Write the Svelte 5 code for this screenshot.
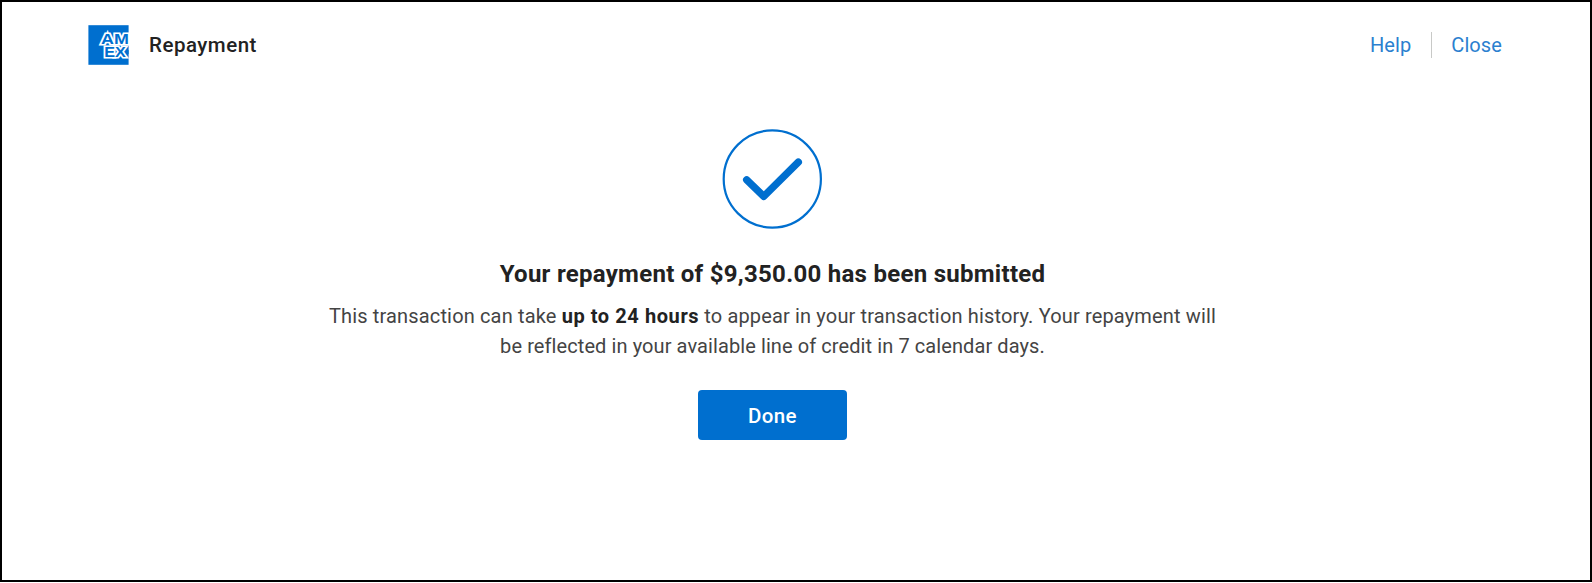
<script>

    let amount = '$9,350.00';

    let links = [
        ['#help', 'Help'],
        ['#close', 'Close'],
    ];

</script>

<div class="page">

    <header>
        <svg class="logo" width="41" height="40" viewBox="0 0 41 40" role="img" aria-label="AMEX">
            <rect x="0.4" y="0.2" width="40.2" height="39.6" fill="#006fcf" />
            <g class="letters">
                <text x="13" y="18.7" textLength="27.8" lengthAdjust="spacingAndGlyphs">AM</text>
                <text x="16.2" y="32" textLength="21.6" lengthAdjust="spacingAndGlyphs">EX</text>
            </g>
            <path d="M40.6 24.8 38.4 27 40.6 29.2" fill="#006fcf" />
        </svg>
        <span class="title">Repayment</span>

        <nav>
            {#each links as [href, title]}
                <a {href}>{title}</a>
            {/each}
        </nav>
    </header>

    <main>
        <svg class="check" width="101" height="100" viewBox="0 0 101 100">
            <circle cx="50.3" cy="50" r="48.6" />
            <path d="M24.7 50.8 41.7 67.4 76.3 33.2" />
        </svg>

        <h1>Your repayment of {amount} has been submitted</h1>

        <p>
            <span class="first">This transaction can take <strong>up to 24 hours</strong> to appear in your transaction history. Your repayment will</span>
            <span class="second">be reflected in your available line of credit in 7 calendar days.</span>
        </p>

        <button>Done</button>
    </main>

</div>

<style>

    .page {
        box-sizing: border-box;
        height: 582px;
        border: 2px solid #000;
        background: #fff;
        color: #222;
        font-family: Roboto, 'Liberation Sans', sans-serif;
        font-size: 20px;
    }

    header {
        display: flex;
        align-items: center;
        height: 41px;
        padding: 22px 88px 0 86px;
    }

    .letters {
        font-family: 'Liberation Sans', sans-serif;
        font-size: 14.5px;
        font-weight: 700;
        fill: #006fcf;
        stroke: #fff;
        stroke-width: 3.2px;
        paint-order: stroke;
    }

    .title {
        margin-left: 20px;
        font-size: 20.5px;
        font-weight: 500;
        letter-spacing: 0.5px;
    }

    nav {
        display: flex;
        margin-left: auto;
    }

    a {
        color: #2b80cf;
        line-height: 26px;
        letter-spacing: 0.1px;
        text-decoration: none;
    }

    a + a {
        margin-left: 20px;
        padding-left: 19px;
        border-left: 1px solid #c8c9c7;
    }

    main {
        display: flex;
        flex-direction: column;
        align-items: center;
        width: 1541px;
        padding-top: 64px;
    }

    .check {
        fill: none;
        stroke: #006fcf;
    }

    circle {
        stroke-width: 2.2px;
    }

    .check path {
        stroke-width: 7.4px;
        stroke-linecap: round;
        stroke-linejoin: round;
    }

    h1 {
        margin: 29px 0 0;
        font-size: 24px;
        font-weight: 700;
        line-height: 32px;
        letter-spacing: 0.28px;
        white-space: nowrap;
    }

    p {
        margin: 11px 0 0;
        color: #444;
        line-height: 30px;
        text-align: center;
        white-space: nowrap;
    }

    p span {
        display: block;
    }

    .first {
        letter-spacing: 0.15px;
    }

    .second {
        letter-spacing: 0.09px;
    }

    strong {
        color: #222;
        font-weight: 700;
        letter-spacing: 0.58px;
    }

    button {
        width: 149px;
        height: 50px;
        margin-top: 29px;
        padding: 2px 0 0;
        border: 0;
        border-radius: 4px;
        background: #006fcf;
        color: #fff;
        font: 500 20.5px Roboto, 'Liberation Sans', sans-serif;
        letter-spacing: 0.4px;
    }

</style>
